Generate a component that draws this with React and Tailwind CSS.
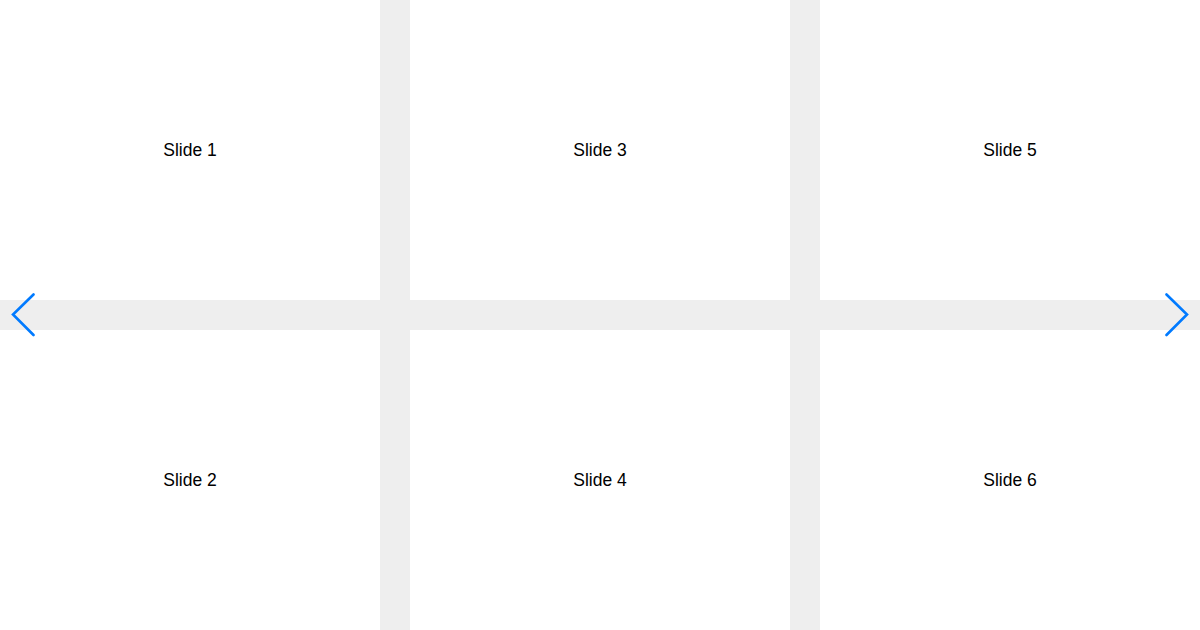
export default function App() {
  const slides = ["Slide 1", "Slide 3", "Slide 5", "Slide 2", "Slide 4", "Slide 6"];
  return (
    <div className="relative w-[1200px] h-[630px] bg-[#eeeeee] overflow-hidden" style={{ fontFamily: '"Liberation Sans", Arial, sans-serif' }}>
      <div className="grid grid-cols-3 grid-rows-[300px_300px] gap-[30px] h-full">
        {slides.map((s) => (
          <div key={s} className="bg-white flex items-center justify-center text-[17.5px] text-black">
            {s}
          </div>
        ))}
      </div>
      <button className="absolute left-[10px] top-[293px] w-[27px] h-[44px]" aria-label="Previous slide">
        <svg width="27" height="44" viewBox="0 0 27 44" fill="none">
          <polyline points="23.5,1.5 3,21.5 23.5,42" stroke="#007aff" strokeWidth="2.6" strokeLinecap="round" strokeLinejoin="miter" />
        </svg>
      </button>
      <button className="absolute right-[10px] top-[293px] w-[27px] h-[44px]" aria-label="Next slide">
        <svg width="27" height="44" viewBox="0 0 27 44" fill="none">
          <polyline points="3.5,1.5 24,21.5 3.5,42" stroke="#007aff" strokeWidth="2.6" strokeLinecap="round" strokeLinejoin="miter" />
        </svg>
      </button>
    </div>
  );
}
